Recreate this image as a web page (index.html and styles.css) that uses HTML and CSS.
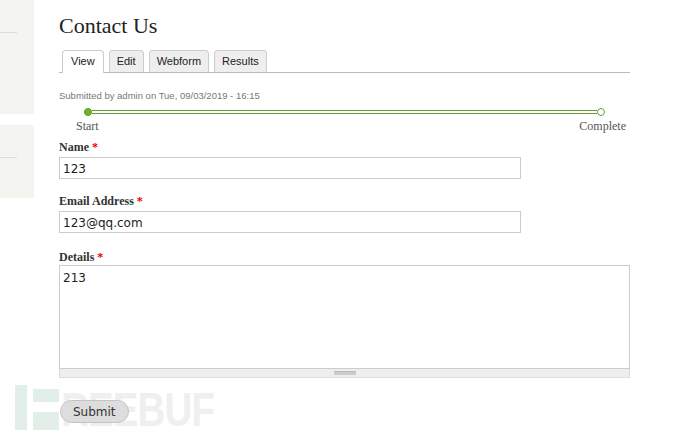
FILE: index.html
```html
<!DOCTYPE html>
<html lang="en">
<head>
    <meta charset="UTF-8">
    <title>Contact Us</title>
    <link rel="stylesheet" href="styles.css">
</head>
<body>
    <div class="page">
        <div class="sidebar">
            <div class="side-block first"><div class="side-line"></div></div>
            <div class="side-block second"><div class="side-line"></div></div>
        </div>

        <div class="main">
            <h1 class="title">Contact Us</h1>
            <ul class="tabs">
                <li class="tab active">View</li>
                <li class="tab">Edit</li>
                <li class="tab">Webform</li>
                <li class="tab">Results</li>
            </ul>

            <div class="submitted">Submitted by admin on Tue, 09/03/2019 - 16:15</div>

            <div class="progress">
                <div class="progress-bar">
                    <span class="dot done"></span>
                    <span class="bar-line"></span>
                    <span class="dot"></span>
                </div>
                <div class="progress-labels">
                    <span>Start</span>
                    <span>Complete</span>
                </div>
            </div>

            <form class="webform">
                <div class="form-item">
                    <label>Name <span class="req">*</span></label>
                    <input type="text" class="text-input" value="123">
                </div>
                <div class="form-item">
                    <label>Email Address <span class="req">*</span></label>
                    <input type="text" class="text-input" value="123@qq.com">
                </div>
                <div class="form-item details">
                    <label>Details <span class="req">*</span></label>
                    <textarea class="text-area">213</textarea>
                    <div class="grippie"><span class="grip-handle"></span></div>
                </div>
                <button type="button" class="submit-btn">Submit</button>
            </form>
        </div>
    </div>

    <!-- watermark, painted behind the form -->
    <div class="watermark">
        <span class="wm-logo">
            <span class="wm-bar"></span>
            <span class="wm-arms"><span></span><span></span></span>
        </span>
        <span class="wm-text">REEBUF</span>
    </div>
</body>
</html>
```

FILE: styles.css
```css
body {
    margin: 0;
    padding: 0;
    background-color: #fff;
    font-family: "Liberation Serif", serif;
    color: #333;
}

.page {
    display: flex;
}

/* left column */
.sidebar {
    width: 34px;
    flex-shrink: 0;
}

.side-block {
    background-color: #f4f4f0;
}

.side-block.first {
    height: 114px;
    padding-top: 32px;
    box-sizing: border-box;
}

.side-block.second {
    height: 73px;
    margin-top: 11px;
    padding-top: 32px;
    box-sizing: border-box;
}

.side-line {
    width: 17px;
    height: 1px;
    background-color: #dcdcd8;
}

/* main column */
.main {
    width: 571px;
    margin-left: 25px;
}

.title {
    font-size: 22px;
    font-weight: normal;
    line-height: 26px;
    margin: 13px 0 11px;
    color: #222;
}

.tabs {
    display: flex;
    gap: 5px;
    list-style: none;
    margin: 0;
    padding: 0 0 0 3px;
    border-bottom: 1px solid #bbb;
    height: 22px;
}

.tab {
    font-family: "Liberation Sans", Arial, sans-serif;
    font-size: 11px;
    line-height: 20px;
    padding: 0 7px;
    border: 1px solid #ccc;
    border-bottom: none;
    border-radius: 4px 4px 0 0;
    background-color: #eee;
    color: #222;
}

.tab.active {
    background-color: #fff;
    height: 22px;
    padding: 0 8px;
}

.submitted {
    font-family: "Liberation Sans", Arial, sans-serif;
    font-size: 9.5px;
    line-height: 12px;
    color: #777;
    margin-top: 17px;
}

.progress {
    margin-top: 5px;
}

.progress-bar {
    display: flex;
    align-items: center;
    margin: 0 25px 0 25px;
    height: 10px;
}

.dot {
    width: 6px;
    height: 6px;
    border-radius: 50%;
    border: 1px solid #6a9a3a;
    background-color: #fff;
    flex-shrink: 0;
}

.dot.done {
    background-color: #6fb12a;
    border-color: #5a9a22;
}

.bar-line {
    flex: 1;
    height: 2px;
    border-top: 1px solid #6a9a3a;
    border-bottom: 1px solid #6a9a3a;
    background-color: #fff;
}

.progress-labels {
    display: flex;
    justify-content: space-between;
    font-size: 12px;
    line-height: 14px;
    color: #555;
    margin: 2px 4px 0 17px;
}

.webform {
    margin-top: 6px;
}

.form-item {
    margin-bottom: 14px;
}

.form-item.details {
    margin-top: 16px;
}

.form-item label {
    display: block;
    font-weight: bold;
    font-size: 12px;
    line-height: 16px;
    margin-bottom: 2px;
    color: #333;
}

.form-item.details label {
    margin-bottom: 0;
}

.req {
    color: #e00;
}

.text-input {
    display: block;
    width: 462px;
    height: 22px;
    box-sizing: border-box;
    border: 1px solid #ccc;
    padding: 1px 3px 0;
    font-family: "DejaVu Sans", sans-serif;
    font-size: 12px;
    color: #222;
    margin: 0;
}

.text-area {
    display: block;
    width: 571px;
    height: 104px;
    box-sizing: border-box;
    border: 1px solid #ccc;
    padding: 5px 3px 3px;
    font-family: "DejaVu Sans", sans-serif;
    font-size: 12px;
    color: #222;
    margin: 0;
    resize: none;
}

.grippie {
    height: 8px;
    background-color: #eee;
    border: 1px solid #ddd;
    border-top: none;
    display: flex;
    justify-content: center;
    align-items: center;
}

.grip-handle {
    width: 22px;
    height: 3px;
    background-color: #ccc;
    border-top: 1px solid #bbb;
}

.submit-btn {
    font-family: "DejaVu Sans", sans-serif;
    font-size: 12px;
    color: #333;
    background-color: #ddd;
    border: 1px solid #c4c4c4;
    border-radius: 12px;
    padding: 0 12px;
    height: 23px;
    margin: 8px 0 0 1px;
}

/* watermark: overlay placed behind the page content */
.watermark {
    position: absolute;
    left: 15px;
    top: 385px;
    z-index: -1;
    display: flex;
    align-items: flex-end;
    pointer-events: none;
}

.wm-logo {
    display: flex;
    gap: 6px;
    height: 45px;
}

.wm-bar {
    width: 12px;
    background-color: #e2eee8;
}

.wm-arms {
    display: flex;
    flex-direction: column;
    justify-content: space-between;
    padding-top: 4px;
}

.wm-arms span {
    width: 26px;
    height: 13px;
    background-color: #e2eee8;
}

.wm-arms span + span {
    height: 18px;
}

.wm-text {
    font-family: "Liberation Sans", Arial, sans-serif;
    font-weight: bold;
    font-size: 48px;
    line-height: 40px;
    color: #efefef;
    letter-spacing: -1px;
    transform: scaleX(0.8);
    transform-origin: left bottom;
    margin-left: 2px;
}
```
